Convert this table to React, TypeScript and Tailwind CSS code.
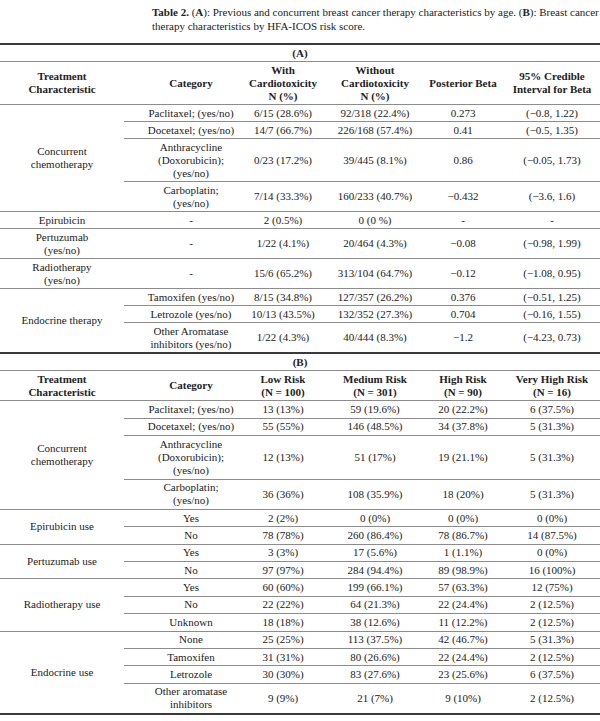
import React from 'react';

type Group = {
  label: string;
  rows: string[][];
};

const tableA: Group[] = [
  {
    label: 'Concurrent\nchemotherapy',
    rows: [
      ['Paclitaxel; (yes/no)', '6/15 (28.6%)', '92/318 (22.4%)', '0.273', '(−0.8, 1.22)'],
      ['Docetaxel; (yes/no)', '14/7 (66.7%)', '226/168 (57.4%)', '0.41', '(−0.5, 1.35)'],
      ['Anthracycline\n(Doxorubicin);\n(yes/no)', '0/23 (17.2%)', '39/445 (8.1%)', '0.86', '(−0.05, 1.73)'],
      ['Carboplatin;\n(yes/no)', '7/14 (33.3%)', '160/233 (40.7%)', '−0.432', '(−3.6, 1.6)'],
    ],
  },
  { label: 'Epirubicin', rows: [['-', '2 (0.5%)', '0 (0 %)', '-', '-']] },
  { label: 'Pertuzumab\n(yes/no)', rows: [['-', '1/22 (4.1%)', '20/464 (4.3%)', '−0.08', '(−0.98, 1.99)']] },
  { label: 'Radiotherapy\n(yes/no)', rows: [['-', '15/6 (65.2%)', '313/104 (64.7%)', '−0.12', '(−1.08, 0.95)']] },
  {
    label: 'Endocrine therapy',
    rows: [
      ['Tamoxifen (yes/no)', '8/15 (34.8%)', '127/357 (26.2%)', '0.376', '(−0.51, 1.25)'],
      ['Letrozole (yes/no)', '10/13 (43.5%)', '132/352 (27.3%)', '0.704', '(−0.16, 1.55)'],
      ['Other Aromatase\ninhibitors (yes/no)', '1/22 (4.3%)', '40/444 (8.3%)', '−1.2', '(−4.23, 0.73)'],
    ],
  },
];

const tableB: Group[] = [
  {
    label: 'Concurrent\nchemotherapy',
    rows: [
      ['Paclitaxel; (yes/no)', '13 (13%)', '59 (19.6%)', '20 (22.2%)', '6 (37.5%)'],
      ['Docetaxel; (yes/no)', '55 (55%)', '146 (48.5%)', '34 (37.8%)', '5 (31.3%)'],
      ['Anthracycline\n(Doxorubicin);\n(yes/no)', '12 (13%)', '51 (17%)', '19 (21.1%)', '5 (31.3%)'],
      ['Carboplatin;\n(yes/no)', '36 (36%)', '108 (35.9%)', '18 (20%)', '5 (31.3%)'],
    ],
  },
  {
    label: 'Epirubicin use',
    rows: [
      ['Yes', '2 (2%)', '0 (0%)', '0 (0%)', '0 (0%)'],
      ['No', '78 (78%)', '260 (86.4%)', '78 (86.7%)', '14 (87.5%)'],
    ],
  },
  {
    label: 'Pertuzumab use',
    rows: [
      ['Yes', '3 (3%)', '17 (5.6%)', '1 (1.1%)', '0 (0%)'],
      ['No', '97 (97%)', '284 (94.4%)', '89 (98.9%)', '16 (100%)'],
    ],
  },
  {
    label: 'Radiotherapy use',
    rows: [
      ['Yes', '60 (60%)', '199 (66.1%)', '57 (63.3%)', '12 (75%)'],
      ['No', '22 (22%)', '64 (21.3%)', '22 (24.4%)', '2 (12.5%)'],
      ['Unknown', '18 (18%)', '38 (12.6%)', '11 (12.2%)', '2 (12.5%)'],
    ],
  },
  {
    label: 'Endocrine use',
    rows: [
      ['None', '25 (25%)', '113 (37.5%)', '42 (46.7%)', '5 (31.3%)'],
      ['Tamoxifen', '31 (31%)', '80 (26.6%)', '22 (24.4%)', '2 (12.5%)'],
      ['Letrozole', '30 (30%)', '83 (27.6%)', '23 (25.6%)', '6 (37.5%)'],
      ['Other aromatase\ninhibitors', '9 (9%)', '21 (7%)', '9 (10%)', '2 (12.5%)'],
    ],
  },
];

const headA = [
  'Treatment\nCharacteristic',
  'Category',
  'With\nCardiotoxicity\nN (%)',
  'Without\nCardiotoxicity\nN (%)',
  'Posterior Beta',
  '95% Credible\nInterval for Beta',
];

const headB = [
  'Treatment\nCharacteristic',
  'Category',
  'Low Risk\n(N = 100)',
  'Medium Risk\n(N = 301)',
  'High Risk\n(N = 90)',
  'Very High Risk\n(N = 16)',
];

// per-column padding so the text centres sit where the reference has them
const colPad = ['', 'pl-[10px]', '', 'pl-[5px]', '', 'pl-[5px]'];

function Lines({ text }: { text: string }) {
  const parts = text.split('\n');
  return (
    <>
      {parts.map((p, i) => (
        <React.Fragment key={i}>
          {i > 0 && <br />}
          {p}
        </React.Fragment>
      ))}
    </>
  );
}

const cellA = 'border-t border-[#8c8c8c] px-0 py-[1.5px] text-center align-middle whitespace-nowrap';
const cellB = 'border-t border-[#8c8c8c] px-0 py-[1.7px] text-center align-middle whitespace-nowrap';
const bottomRule = ' border-b-2 border-b-[#3a3a3a]';

function Section({ title, head, groups, last }: { title: string; head: string[]; groups: Group[]; last?: boolean }) {
  const cell = last ? cellB : cellA;
  return (
    <>
      <tr>
        <td colSpan={6} className="border-t-2 border-[#3a3a3a] px-0 py-[1.5px] text-center font-bold">
          {title}
        </td>
      </tr>
      <tr>
        {head.map((h, i) => (
          <th key={i} className={cell + ' font-bold ' + colPad[i]}>
            <Lines text={h} />
          </th>
        ))}
      </tr>
      {groups.map((g, gi) =>
        g.rows.map((r, ri) => {
          const lastGroup = last && gi === groups.length - 1;
          const isLast = lastGroup && ri === g.rows.length - 1;
          return (
            <tr key={gi + '-' + ri}>
              {ri === 0 && (
                <td rowSpan={g.rows.length} className={cell + (lastGroup ? bottomRule : '')}>
                  <Lines text={g.label} />
                </td>
              )}
              {r.map((c, ci) => (
                <td key={ci} className={cell + ' ' + colPad[ci + 1] + (isLast ? bottomRule : '')}>
                  <Lines text={c} />
                </td>
              ))}
            </tr>
          );
        })
      )}
    </>
  );
}

export default function App() {
  return (
    <div className="w-[600px] h-[721px] bg-white text-[#222] font-[family-name:Liberation_Serif,serif] text-[11px] leading-[13px] overflow-hidden">
      <p className="pl-[152px] pt-[5px] leading-[14px] whitespace-nowrap">
        <b>Table 2.</b> (<b>A</b>): Previous and concurrent breast cancer therapy characteristics by age. (<b>B</b>): Breast cancer
        <br />
        therapy characteristics by HFA-ICOS risk score.
      </p>
      <table className="mt-[10px] w-[600px] table-fixed border-collapse">
        <colgroup>
          <col className="w-[124px]" />
          <col className="w-[124px]" />
          <col className="w-[70px]" />
          <col className="w-[109px]" />
          <col className="w-[72px]" />
          <col className="w-[101px]" />
        </colgroup>
        <tbody>
          <Section title="(A)" head={headA} groups={tableA} />
          <Section title="(B)" head={headB} groups={tableB} last />
        </tbody>
      </table>
    </div>
  );
}
